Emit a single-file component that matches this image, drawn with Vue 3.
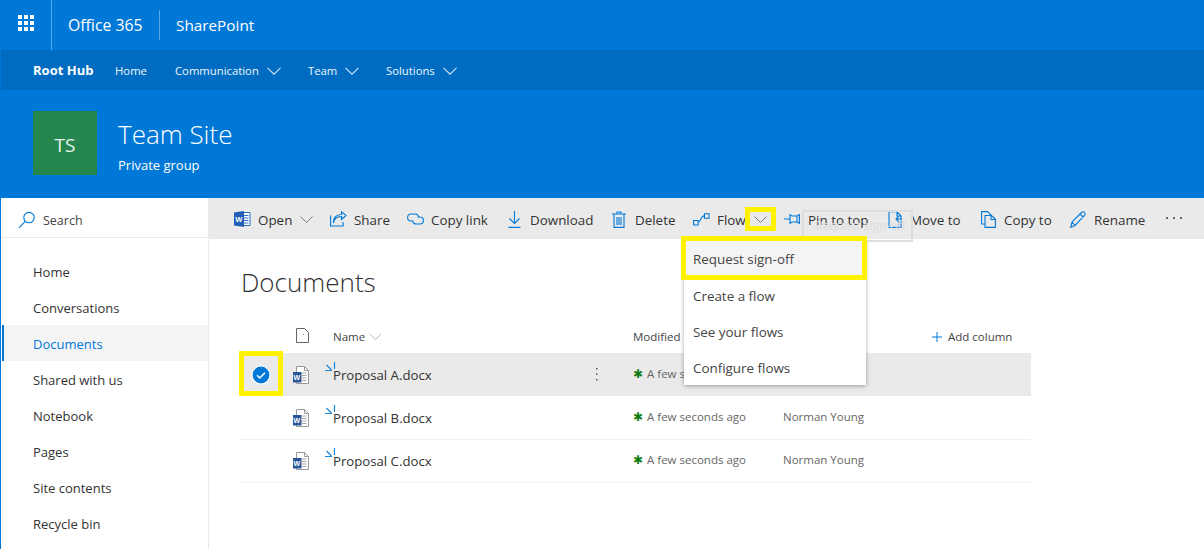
<script setup>
const hubLinks = [
  { label: 'Home', width: 60, chevron: false },
  { label: 'Communication', width: 133, chevron: true },
  { label: 'Team', width: 78, chevron: true },
  { label: 'Solutions', width: 80, chevron: true },
]
const commands = [
  { label: 'Open', icon: 'word', start: 234, textGap: 24, chevron: true, next: 330 },
  { label: 'Share', icon: 'share', start: 330, textGap: 24, next: 407 },
  { label: 'Copy link', icon: 'link', start: 407, textGap: 24, next: 508 },
  { label: 'Download', icon: 'download', start: 508, textGap: 22, next: 612 },
  { label: 'Delete', icon: 'trash', start: 612, textGap: 23, next: 693 },
  { label: 'Flow', icon: 'flow', start: 693, textGap: 24, chevron: true, next: 784 },
  { label: 'Pin to top', icon: 'pin', start: 784, textGap: 24, next: 888 },
  { label: 'Move to', icon: 'move', start: 888, textGap: 22, next: 981 },
  { label: 'Copy to', icon: 'copy', start: 981, textGap: 23, next: 1070 },
  { label: 'Rename', icon: 'pencil', start: 1070, textGap: 24, next: 1165 },
]
const navItems = ['Home', 'Conversations', 'Documents', 'Shared with us', 'Notebook', 'Pages', 'Site contents', 'Recycle bin']
const files = [
  { name: 'Proposal A.docx', selected: true },
  { name: 'Proposal B.docx', selected: false },
  { name: 'Proposal C.docx', selected: false },
]
const flowMenu = ['Request sign-off', 'Create a flow', 'See your flows', 'Configure flows']
</script>

<template>
  <div class="page">
    <header class="suite">
      <div class="waffle">
        <svg width="16" height="16" viewBox="0 0 16 16" fill="#fff">
          <template v-for="y in [0, 6, 12]" :key="y">
            <rect v-for="x in [0, 6, 12]" :key="x" :x="x" :y="y" width="4" height="4" />
          </template>
        </svg>
      </div>
      <span class="brand">Office 365</span>
      <span class="app">SharePoint</span>
    </header>

    <nav class="hub">
      <strong class="hub-title">Root Hub</strong>
      <span v-for="l in hubLinks" :key="l.label" class="hub-link" :style="{ width: l.width + 'px' }">
        {{ l.label }}
        <svg v-if="l.chevron" class="hub-chev" width="14" height="8" viewBox="0 0 14 8" fill="none" stroke="#cfe4f7" stroke-width="1.1"><path d="M.5 .8 7 7.2 13.5 .8" /></svg>
      </span>
    </nav>

    <section class="site">
      <div class="tile">TS</div>
      <div>
        <h1 class="site-title">Team Site</h1>
        <div class="site-sub">Private group</div>
      </div>
    </section>

    <div class="body">
      <aside class="side">
        <div class="search">
          <svg width="18" height="18" viewBox="0 0 18 18" fill="none" stroke="#0078d7" stroke-width="1.1"><circle cx="11" cy="6.600" r="5.200" /><path d="M7.200 10.400 1 16.800" /></svg>
          <span class="search-label">Search</span>
        </div>
        <ul class="nav">
          <li v-for="n in navItems" :key="n" :class="{ active: n === 'Documents' }">{{ n }}</li>
        </ul>
      </aside>

      <main class="main">
        <div class="cmdbar">
          <div v-for="c in commands" :key="c.label" class="cmd" :style="{ width: c.next - c.start + 'px' }">
            <span class="cmd-icon" :style="{ width: c.textGap + 'px' }">
              <svg v-if="c.icon === 'word'" width="17" height="18" viewBox="0 0 17 18">
                <path d="M6 2.500h10v13H6z" fill="#fff" stroke="#2b6fc4" />
                <path d="M10 5.500h4.500M10 8h4.500M10 10.500h4.500M10 13h4.500" stroke="#2b6fc4" />
                <path d="M0 2.500 10 1v16L0 15.500z" fill="#1f5fb8" />
                <text x="1.300" y="12" font-size="7.500" font-weight="700" fill="#fff" font-family="Liberation Sans, sans-serif">W</text>
              </svg>
              <svg v-else-if="c.icon === 'share'" width="17" height="16" viewBox="0 0 17 16" fill="none" stroke="#0078d7" stroke-width="1.100"><path d="M.6 4.500v10.500h12.500v-4" /><path d="M3.500 12c.5-4.500 3.500-6.500 8-6.500V8.500L16 4.500 11.500.8v2.700C6 3.500 3 7 3.500 12z" /></svg>
              <svg v-else-if="c.icon === 'link'" width="17" height="12" viewBox="0 0 17 12" fill="none" stroke="#0078d7" stroke-width="1.100"><path d="M6 8H4C2 8 .6 6.500.6 4.500S2 1 4 1h4c2 0 3.400 1.500 3.400 3.500" /><path d="M11 4h2c2 0 3.400 1.500 3.400 3.500S15 11 13 11H9C7 11 5.600 9.500 5.600 7.500" /></svg>
              <svg v-else-if="c.icon === 'download'" width="13" height="17" viewBox="0 0 13 17" fill="none" stroke="#0078d7" stroke-width="1.100"><path d="M6.500 0v12.500M1.500 7.500l5 5 5-5M.5 16.400h12" /></svg>
              <svg v-else-if="c.icon === 'trash'" width="14" height="17" viewBox="0 0 14 17" fill="none" stroke="#0078d7" stroke-width="1.100"><path d="M0 3h14M5 3V1h4v2M2 3v13.400h10V3M5 6v8M7 6v8M9 6v8" /></svg>
              <svg v-else-if="c.icon === 'flow'" width="17" height="13" viewBox="0 0 17 13" fill="none" stroke="#0078d7" stroke-width="1.100"><path d="M.6 7.500h4.500v4.500H.6zM11.500.8h4.500v4.500h-4.500zM5 9c3 0 3-6.500 6.500-6.500" /></svg>
              <svg v-else-if="c.icon === 'pin'" width="16" height="10" viewBox="0 0 16 10" fill="none" stroke="#0078d7" stroke-width="1.100"><path d="M0 5h6M6 .6l2 1.400h5L15.400 .6v8.800L13 8H8L6 9.400zM13 2v6" /></svg>
              <svg v-else-if="c.icon === 'move'" width="14" height="17" viewBox="0 0 14 17" fill="none" stroke="#0078d7" stroke-width="1.100"><path d="M13 5v11.400H1V.6h8M9 .6 13 5H9zM14 8H8M10.500 5.500 8 8l2.500 2.500M11 10.500v3.500" /></svg>
              <svg v-else-if="c.icon === 'copy'" width="15" height="17" viewBox="0 0 15 17" fill="none" stroke="#0078d7" stroke-width="1.100"><path d="M4 13H.6V.6h6L10 4v1M4 4.500h6.500L14.400 8v8.400H4zM10 4.500v4h4.400" /></svg>
              <svg v-else-if="c.icon === 'pencil'" width="16" height="17" viewBox="0 0 16 17" fill="none" stroke="#0078d7" stroke-width="1.100"><path d="M.8 16.200 2 11 11.500 1.500c1-1 2.200-1 3 0s.8 2 0 3L5 14.500zM2 11l3 3.500M10 3l3.500 3.500" /></svg>
            </span>
            <span class="cmd-label">{{ c.label }}</span>
            <svg v-if="c.chevron" class="cmd-chev" width="13" height="7" viewBox="0 0 13 7" fill="none" stroke="#7a7a7a" stroke-width="1"><path d="M.5 .5 6.500 6.500 12.500 .5" /></svg>
          </div>
          <span class="more"><i></i><i></i><i></i></span>
        </div>

        <div class="content">
          <h2 class="doc-title">Documents</h2>
          <div class="table">
            <div class="row head">
              <span class="c-check"></span>
              <span class="c-icon">
                <svg width="13" height="15" viewBox="0 0 13 15" fill="none" stroke="#666" stroke-width="1"><path d="M.5 .5h8l4 4v10H.5z" /><path d="M7 6.500h.8" /></svg>
              </span>
              <span class="c-name">Name
                <svg class="name-chev" width="13" height="7" viewBox="0 0 13 7" fill="none" stroke="#bbb" stroke-width="1"><path d="M.5 .5 6.500 6.500 12.500 .5" /></svg>
              </span>
              <span class="c-mod">Modified</span>
              <span class="c-by"></span>
              <span class="c-add"><svg width="10" height="10" viewBox="0 0 10 10" stroke="#0078d7" stroke-width="1"><path d="M5 0v10M0 5h10" /></svg>Add column</span>
            </div>
            <div v-for="f in files" :key="f.name" class="row file" :class="{ selected: f.selected }">
              <span class="c-check">
                <svg v-if="f.selected" width="20" height="20" viewBox="0 0 20 20"><circle cx="10" cy="10" r="9" fill="#0078d7" stroke="#fff" stroke-width="1.200" /><path d="M6 10.200 8.800 13 14 7.800" fill="none" stroke="#fff" stroke-width="1.500" /></svg>
              </span>
              <span class="c-icon">
                <svg width="16" height="18" viewBox="0 0 16 18">
                  <path d="M3.500 .5h8l4 4v13h-12z" fill="#fff" stroke="#999" />
                  <path d="M11.500 .5v4h4" fill="none" stroke="#999" />
                  <path d="M9 7h4.500M9 9.500h4.500M9 12h4.500M9 14.500h4.500" stroke="#a8a8a8" />
                  <rect y="6" width="8.500" height="10.500" fill="#2b579a" />
                  <text x=".5" y="14" font-size="7" font-weight="700" fill="#fff" font-family="Liberation Sans, sans-serif">W</text>
                </svg>
              </span>
              <span class="c-name file-name">
                <svg class="sync" width="11" height="13" viewBox="0 0 11 13" fill="none" stroke="#1a86dc" stroke-width="1.200"><path d="M0 8.500h7M1.500 3 6.500 8M9.500 0v7" /></svg>
                {{ f.name }}
                <svg v-if="f.selected" class="kebab" width="3" height="13" viewBox="0 0 3 13" fill="#555"><rect x="1" width="1.500" height="1.500" /><rect x="1" y="5.500" width="1.500" height="1.500" /><rect x="1" y="11" width="1.500" height="1.500" /></svg>
              </span>
              <span class="c-mod when"><b class="star">✱</b>A few seconds ago</span>
              <span class="c-by">Norman Young</span>
              <span class="c-add"></span>
            </div>
          </div>
        </div>
      </main>
    </div>

    <div class="ghost-tip">Request sign-off</div>

    <div class="menu">
      <div v-for="(m, i) in flowMenu" :key="m" class="menu-item" :class="{ hot: i === 0 }">{{ m }}</div>
    </div>

    <span class="mark mark-chev"></span>
    <span class="mark mark-item"></span>
    <span class="mark mark-check"></span>
  </div>
</template>

<style>
html, body { margin: 0; background: #fff; overflow: hidden; }
</style>

<style scoped>
.page {
  position: relative;
  width: 1204px;
  height: 549px;
  overflow: hidden;
  background: #fff;
  color: #333;
  font-family: "Open Sans", "Noto Sans", sans-serif;
  font-size: 13px;
  box-sizing: border-box;
  border-left: 1px solid #0078d7;
}
.suite {
  height: 50px;
  background: #0078d7;
  color: #fff;
  display: flex;
  align-items: center;
  margin-left: -1px;
}
.waffle {
  width: 52px;
  height: 50px;
  display: flex;
  align-items: center;
  justify-content: center;
  box-sizing: border-box;
  padding-bottom: 4px;
  border-right: 1px solid #58a9e8;
}
.brand {
  margin-left: 16px;
  width: 91px;
  height: 30px;
  line-height: 30px;
  font-size: 15.800px;
  border-right: 1px solid #58a9e8;
}
.app { margin-left: 16px; font-size: 15.300px; }
.hub {
  height: 40px;
  background: #006cc1;
  color: #fff;
  display: flex;
  align-items: center;
  padding-left: 32px;
  font-size: 11.300px;
}
.hub-title { width: 82px; font-size: 13px; font-weight: 700; }
.hub-link { display: flex; align-items: center; color: #f0f6fc; white-space: nowrap; }
.hub-chev { margin-left: 8px; margin-top: 2px; }
.site {
  height: 108px;
  background: #0078d7;
  color: #fff;
  display: flex;
  align-items: center;
  padding-left: 32px;
  box-sizing: border-box;
  padding-bottom: 2px;
}
.tile {
  width: 64px;
  height: 64px;
  background: #26874e;
  display: flex;
  align-items: center;
  justify-content: center;
  box-sizing: border-box;
  padding-top: 4px;
  font-size: 19px;
  color: #e8f3ec;
  margin-right: 21px;
}
.site-title {
  margin: 5px 0 0;
  font-size: 26px;
  font-weight: 300;
  line-height: 34px;
}
.site-sub { font-size: 13px; line-height: 18px; margin-top: 5px; }
.body { display: flex; height: 351px; }
.side {
  width: 207px;
  border-right: 1px solid #eaeaea;
  flex: none;
}
.search {
  height: 40px;
  box-sizing: border-box;
  border-bottom: 1px solid #eaeaea;
  display: flex;
  align-items: center;
  gap: 7px;
  padding: 4px 0 0 17px;
  margin-right: -1px;
  font-size: 12.500px;
  color: #444;
}
.search-label { padding-top: 2px; }
.nav { list-style: none; margin: 15px 0 0; padding: 0; }
.nav li {
  height: 36px;
  line-height: 38px;
  padding-left: 32px;
  font-size: 13px;
  color: #333;
}
.nav li.active {
  background: #f4f4f4;
  color: #0078d7;
  margin-left: 1px;
  padding-left: 29px;
  border-left: 2px solid #0078d7;
}
.main { flex: 1; min-width: 0; }
.cmdbar {
  height: 41px;
  background: #eaeaea;
  display: flex;
  align-items: center;
  padding: 1px 0 0 25px;
  box-sizing: border-box;
  color: #333;
  font-size: 13.400px;
}
.cmd { display: flex; align-items: center; flex: none; white-space: nowrap; }
.cmd-icon { display: flex; align-items: center; flex: none; }
.cmd-label { padding-top: 2px; }
.cmd-chev { margin-left: 8px; }
.more { display: flex; gap: 5px; margin: -2px 0 0 1px; }
.more i { width: 2px; height: 2px; background: #666; }
.content { padding: 0 0 0 31px; }
.doc-title {
  margin: 0;
  height: 81px;
  line-height: 87px;
  font-size: 26px;
  font-weight: 300;
  color: #333;
  padding-left: 1px;
}
.table { width: 791px; }
.row { display: flex; align-items: center; }
.head { height: 33px; font-size: 11.500px; color: #444; }
.file {
  height: 43px;
  border-bottom: 1px solid #f2f2f2;
  box-sizing: border-box;
  font-size: 13.200px;
}
.file.selected {
  height: 44px;
  background: #eaeaea;
  background-clip: padding-box;
  border-bottom-color: #fff;
}
.c-check { width: 44px; height: 100%; display: flex; align-items: center; padding-left: 11px; box-sizing: border-box; flex: none; }
.c-icon { width: 49px; padding-left: 9px; box-sizing: border-box; display: flex; align-items: center; flex: none; }
.head .c-icon { padding-left: 12px; padding-bottom: 2px; }
.file .c-icon { padding-left: 9px; }
.c-name { position: relative; width: 300px; flex: none; display: flex; align-items: center; }
.file-name { color: #333; height: 100%; }
.name-chev { margin-left: 4px; }
.sync { position: absolute; left: -8px; top: 8px; }
.selected .sync { top: 9px; }
.kebab { position: absolute; left: 262px; top: 15px; }
.c-mod { width: 150px; flex: none; }
.when { font-size: 11.500px; color: #666; display: flex; align-items: center; margin-top: -4px; }
.selected .when { margin-top: -2px; }
.star { color: #107c10; font-size: 12px; width: 14px; font-family: "DejaVu Sans", sans-serif; font-weight: 400; margin-top: 1px; }
.c-by { width: 149px; flex: none; font-size: 11.500px; color: #666; margin-top: -4px; }
.c-add { display: flex; align-items: center; gap: 6px; white-space: nowrap; font-size: 11.500px; }
.ghost-tip {
  position: absolute;
  left: 801px;
  top: 210px;
  width: 111px;
  height: 32px;
  box-sizing: border-box;
  border: 2px solid #dedede;
  line-height: 28px;
  padding-left: 11px;
  font-size: 12px;
  color: #ddd;
  white-space: nowrap;
}
.menu {
  position: absolute;
  left: 683px;
  top: 241px;
  width: 182px;
  height: 144px;
  background: #fff;
  box-shadow: 0 1px 4px rgba(0, 0, 0, .35);
}
.menu-item {
  height: 36px;
  line-height: 38px;
  padding-left: 9px;
  font-size: 13.400px;
  color: #444;
}
.menu-item.hot { background: #f4f4f4; line-height: 36px; }
.mark { position: absolute; box-sizing: border-box; border: 5px solid #fff200; }
.mark-chev { left: 744px; top: 207px; width: 31px; height: 24px; }
.mark-item { left: 680px; top: 236px; width: 186px; height: 44px; }
.mark-check { left: 238px; top: 351px; width: 44px; height: 45px; }
</style>
